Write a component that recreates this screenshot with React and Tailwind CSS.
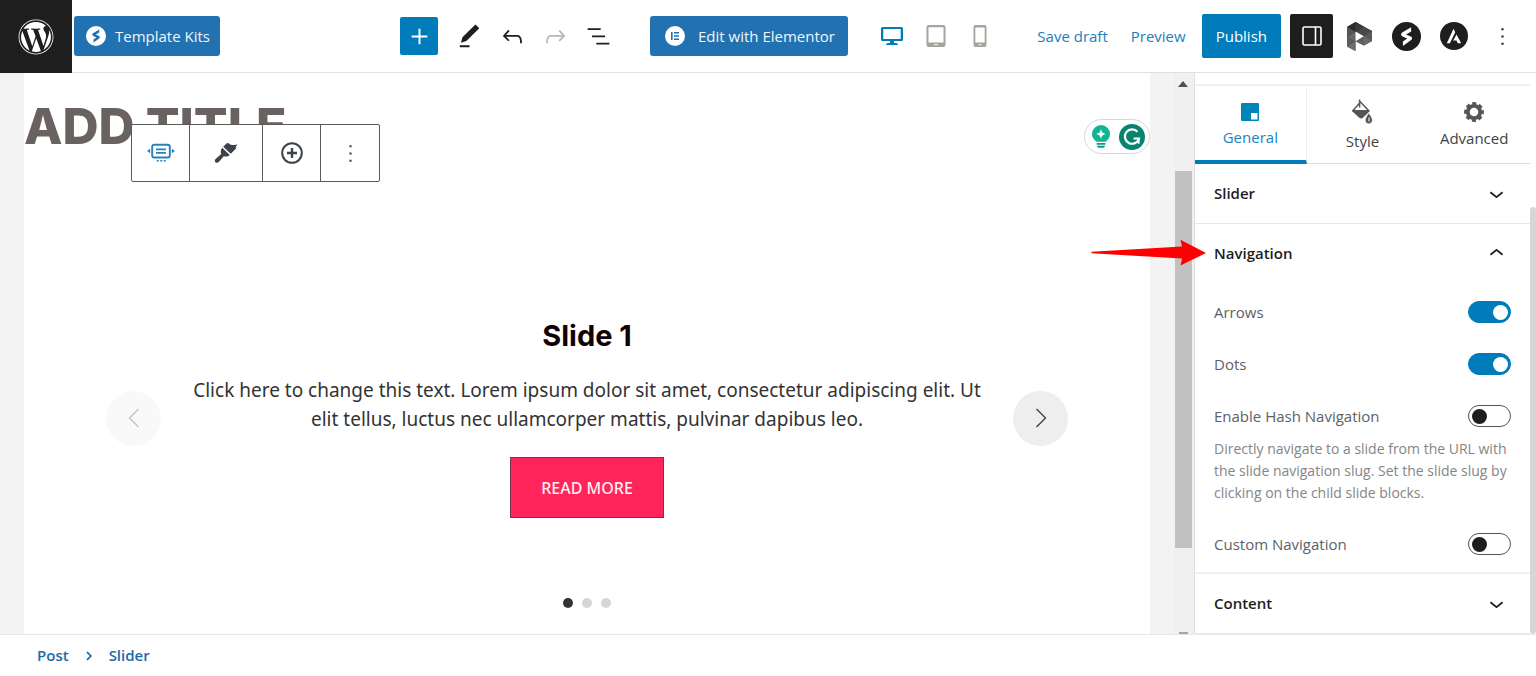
import { FaWordpress } from "react-icons/fa";

const UI_FONT = "font-['Open_Sans','Noto_Sans',sans-serif]";

function WpIcon({ d, className = "size-[29px]" }) {
  return (
    <svg viewBox="0 0 24 24" fill="currentColor" className={className} aria-hidden="true">
      <path d={d} />
    </svg>
  );
}

const UNDO =
  "M18.3 11.7c-.6-.6-1.4-.9-2.3-.9H6.7l2.9-3.3-1.1-1-4.5 5L8.5 16l1-1-2.7-2.7H16c.5 0 .9.2 1.3.5 1 1 1 3.4 1 4.5v.3h1.5v-.2c0-1.5 0-4.3-1.5-5.7z";
const REDO =
  "M15.6 6.5l-1.1 1 2.9 3.3H8c-.9 0-1.7.3-2.3.9-1.4 1.5-1.4 4.2-1.4 5.6v.2h1.5v-.3c0-1.1 0-3.5 1-4.5.3-.3.7-.5 1.3-.5h9.2L14.5 15l1.1 1.1 4.6-4.6-4.6-5z";
const EDIT = "M20.1 5.1L16.9 2 6.2 12.7l-1.3 4.4 4.5-1.3L20.1 5.1zM4 20.8h8v-1.5H4v1.5z";
const LIST = "M13.8 5.2H3v1.5h10.8V5.2zm-3.6 12v1.5H21v-1.5H10.2zm7.2-6H6.6v1.5h10.8v-1.5z";
const PLUS = "M11.2 5.5h1.6v5.7h5.7v1.6h-5.7v5.7h-1.6v-5.7H5.5v-1.6h5.7z";
const DOWN = "M17.5 11.6L12 16l-5.5-4.4.9-1.2L12 14l4.6-3.6.9 1.2z";
const UP = "M6.5 12.4L12 8l5.5 4.4-.9 1.2L12 10l-4.6 3.6-.9-1.2z";
const MORE = "M12.900 18.900h-1.800v-1.800h1.800v1.800zm0-6h-1.800v-1.800h1.800v1.800zm0-6h-1.800V5.100h1.800v1.800z";

function Spectra({ bg, fg, className }) {
  return (
    <svg viewBox="0 0 30 30" className={className} aria-hidden="true">
      <circle cx="15" cy="15" r="15" fill={bg} />
      <path
        fill={fg}
        d="M19.800 5.400v4.400l-5.200 3.100 4.800 2.200c1.700.8 1.900 2.600.4 3.600l-8.500 6v-4.400l4.400-3.200-4.800-2.200c-1.900-.9-2-3-.4-4z"
      />
    </svg>
  );
}

function Header() {
  return (
    <header className="flex h-[73px] items-center border-b border-[#e0e0e0] bg-white text-[15px] text-[#1e1e1e]">
      <div className="flex w-[400px] shrink-0 items-center gap-[2px]">
        <a
          href="#dashboard"
          aria-label="View posts"
          className="-mb-px flex h-[73px] w-[72px] items-center justify-center bg-[#1e1e1e] text-white"
        >
          <FaWordpress className="size-9" />
        </a>
        <button className="flex h-10 items-center gap-[9px] rounded-[3px] bg-[#2271b1] pr-[10px] pl-3 text-[#f0f6fc]">
          <Spectra bg="#fff" fg="#2271b1" className="size-5" />
          Template Kits
        </button>
      </div>

      <div className="flex items-center">
        <button aria-label="Add block" className="flex size-[38px] items-center justify-center rounded-[2px] bg-[#007cba] text-white">
          <WpIcon d={PLUS} />
        </button>
        <div className="ml-[17px] flex items-center gap-[14px]">
          <button aria-label="Tools"><WpIcon d={EDIT} /></button>
          <button aria-label="Undo"><WpIcon d={UNDO} /></button>
          <button aria-label="Redo" className="text-[#b8b8b8]"><WpIcon d={REDO} /></button>
          <button aria-label="List view"><WpIcon d={LIST} /></button>
        </div>
        <button className="ml-[37px] flex h-10 items-center gap-[13px] rounded-[3px] bg-[#2271b1] pr-[13px] pl-[15px] text-[#f0f6fc]">
          <svg viewBox="0 0 20 20" className="size-5" aria-hidden="true">
            <circle cx="10" cy="10" r="10" fill="#fff" />
            <path fill="#2271b1" d="M6 6h1.600v8H6zM9 6h5v1.600H9zM9 9.200h5v1.600H9zM9 12.400h5V14H9z" />
          </svg>
          Edit with Elementor
        </button>
      </div>

      <div className="ml-auto flex items-center">
        <div className="flex items-center gap-[22px] text-[#a2a69c]">
          <button aria-label="Desktop" className="text-[#007cba]">
            <svg viewBox="0 0 22 22" className="size-[22px]" aria-hidden="true">
              <path fill="currentColor" fillRule="evenodd" d="M1.500 2h19a1.500 1.500 0 0 1 1.500 1.500v11a1.500 1.500 0 0 1-1.500 1.500H13v2h2c1 0 2 .8 2 2H5c0-1.200 1-2 2-2h2v-2H1.500A1.500 1.500 0 0 1 0 14.500v-11A1.500 1.500 0 0 1 1.500 2zM2.300 4v10h17.400V4z" />
            </svg>
          </button>
          <button aria-label="Tablet">
            <svg viewBox="0 0 22 22" className="size-[22px]" aria-hidden="true">
              <path fill="currentColor" fillRule="evenodd" d="M3.500 0h15A2 2 0 0 1 20.500 2v18a2 2 0 0 1-2 2h-15a2 2 0 0 1-2-2V2a2 2 0 0 1 2-2zM3.500 2.200v15.400h15V2.200z" />
              <path fill="#e9ebe6" d="M9 19h4.200v1.200H9z" />
            </svg>
          </button>
          <button aria-label="Mobile">
            <svg viewBox="0 0 22 22" className="size-[22px]" aria-hidden="true">
              <path fill="currentColor" fillRule="evenodd" d="M6.500 0h9A2 2 0 0 1 17.500 2v18a2 2 0 0 1-2 2h-9a2 2 0 0 1-2-2V2a2 2 0 0 1 2-2zM6.300 2.600v15h9.400v-15z" />
              <path fill="#e9ebe6" d="M9.500 19h3v1.200h-3z" />
            </svg>
          </button>
        </div>
        <button className="ml-[46px] text-[#2080bc]">Save draft</button>
        <button className="ml-[23px] text-[#2080bc]">Preview</button>
        <button className="ml-4 h-11 rounded-[2px] bg-[#007cba] px-[14px] text-white">Publish</button>
        <button aria-label="Settings" className="ml-[9px] flex h-11 w-[43px] items-center justify-center rounded-[2px] bg-[#1e1e1e] text-white">
          <svg viewBox="0 0 20 20" className="size-5" fill="none" stroke="currentColor" strokeWidth="1.600" aria-hidden="true">
            <rect x="1" y="1" width="18" height="18" rx="1.500" />
            <path d="M13.500 1v18" />
          </svg>
        </button>
        <button aria-label="Prime Slider" className="ml-[14px]">
          <svg viewBox="0 0 25 29" className="h-[29px] w-[25px]" aria-hidden="true">
            <path fill="#4a4a4a" d="M8.500 0L25 9v10l-8 4.500-8.500-4.300V29L0 24.500V5z" />
            <path fill="#2c2c2c" d="M8.500 0L0 5l8.500 5 8.500-5.300z" />
            <path fill="#3c3c3c" d="M8.500 0v10L17 4.700z" />
            <path fill="#555" d="M0 5v10l8.500-5z" />
            <path fill="#686868" d="M0 15l8.500-5v9.200z" />
            <path fill="#5c5c5c" d="M0 15v9.500l8.500-5.300z" />
            <path fill="#6e6e6e" d="M8.500 19.200L0 24.500 8.500 29z" />
            <path fill="#484848" d="M17 4.700V14l8-5z" />
            <path fill="#5a5a5a" d="M25 9v10l-8-5z" />
            <path fill="#6a6a6a" d="M17 14v9.500l8-4.500z" />
            <path fill="#606060" d="M17 14v9.500l-8.500-4.300z" />
            <path fill="#fff" d="M8.500 9.600l8.300 4.600-8.300 5z" />
          </svg>
        </button>
        <button aria-label="Spectra" className="ml-5">
          <Spectra bg="#1e1e1e" fg="#fff" className="size-[29px]" />
        </button>
        <button aria-label="Astra settings" className="ml-[19px]">
          <svg viewBox="0 0 28 28" className="size-7" aria-hidden="true">
            <circle cx="14" cy="14" r="14" fill="#1e1e1e" />
            <path fill="#fff" d="M13.500 6.800l1.700 3.500-5.300 11H6.800zM16.500 12.500l4.700 8.800h-3.500l-1.200-2.700h-3.300z" />
          </svg>
        </button>
        <button aria-label="Options" className="mr-[19px] ml-5"><WpIcon d={MORE} /></button>
      </div>
    </header>
  );
}

function BlockToolbar() {
  return (
    <div className="absolute top-[51px] left-[107px] flex h-[58px] divide-x divide-[#5a5a5a] rounded-[2px] border border-[#5a5a5a] bg-white text-[#3c434a]">
      <button aria-label="Slider block" className="flex w-[58px] items-center justify-center text-[#2a80bb]">
        <svg viewBox="0 0 28 20" className="h-5 w-7" fill="none" aria-hidden="true">
          <rect x="5.200" y="1.700" width="17.600" height="12.800" rx="2" stroke="currentColor" strokeWidth="1.900" />
          <path stroke="currentColor" strokeWidth="1.700" d="M9 6.300h10M9 9.800h10" />
          <path fill="currentColor" d="M0 8l3.200-2.300v4.600zM28 8l-3.200-2.300v4.600z" />
          <path stroke="currentColor" strokeWidth="1.600" strokeDasharray="2 1.500" d="M9.800 17.700h9" />
        </svg>
      </button>
      <button aria-label="Copy styles" className="flex w-[73px] items-center justify-center">
        <svg viewBox="0 0 24 20" className="h-5 w-6" fill="currentColor" aria-hidden="true">
          <path d="M9.200 3.800L12.400.6c1-.8 2-.6 2.900.1l.8.7c2.300.7 4.800 1 7.200.2-.3 1.200-1.300 2-2.200 2.700.6.200 1 .2 1.500 0-.6 1.500-1.700 2.600-3 3.700l-2.800 2.800z" />
          <path d="M8.200 4.800l7.500 7.200-1.600 1.300c-1.700.6-3 .2-4.300 0l-5 5.600c-1 1-2.500 1.100-3.400.3-.9-.9-.8-2.200.2-3.200l5.600-4.900c-.5-1.600-.7-3 .1-4.800z" />
        </svg>
      </button>
      <button aria-label="Add slide" className="flex w-[58px] items-center justify-center">
        <svg viewBox="0 0 22 22" className="size-[22px]" fill="none" stroke="currentColor" aria-hidden="true">
          <circle cx="11" cy="11" r="9.800" strokeWidth="2" />
          <path strokeWidth="2.400" d="M11 6v10M6 11h10" />
        </svg>
      </button>
      <button aria-label="Options" className="flex w-[58px] items-center justify-center"><WpIcon d={MORE} /></button>
    </div>
  );
}

function GrammarBadge() {
  return (
    <div className="absolute top-[46px] right-0 flex h-[35px] w-[66px] items-center justify-between rounded-full border border-[#d5d7e3] bg-white pr-1 pl-[7px]">
      <svg viewBox="0 0 18 23" className="h-[23px] w-[18px]" aria-hidden="true">
        <path fill="#0fb595" d="M9 0a9 9 0 0 1 9 9c0 3.500-2 6-4.500 7.800h-9C2 15 0 12.500 0 9a9 9 0 0 1 9-9z" />
        <path fill="#0b9c82" d="M4.700 18h8.600v1.700H4.700zM5 20.800h8c-.2 1.400-1 2-2 2H7c-1 0-1.800-.6-2-2z" />
        <path fill="#fff" d="M9 4c.7 3.200 1.800 4.300 5 5-3.200.7-4.300 1.800-5 5-.7-3.200-1.800-4.300-5-5 3.200-.7 4.300-1.800 5-5z" />
      </svg>
      <svg viewBox="0 0 26 26" className="size-[26px]" fill="none" aria-hidden="true">
        <circle cx="13" cy="13" r="13" fill="#07846f" />
        <path stroke="#fff" strokeWidth="2.200" d="M18.500 7.800A7.200 7.200 0 1 0 20 14.500h-5.500" />
        <path stroke="#fff" strokeWidth="2" d="M19.600 14.500v5.200" />
      </svg>
    </div>
  );
}

function Canvas() {
  return (
    <section className="flex min-w-0 flex-1 bg-[#f3f3f3] pl-6">
      <div className="relative min-w-0 flex-1 bg-white pt-6">
        <h1 className="font-['Inter',sans-serif] text-[50px] leading-[58px] font-extrabold text-[#6a6161]">ADD TITLE</h1>
        <BlockToolbar />
        <GrammarBadge />
        <div className="mt-[163px] flex items-center gap-[26px] px-[82px]">
          <button aria-label="Previous slide" className="flex size-[55px] shrink-0 items-center justify-center rounded-full bg-[#f9f9f9] text-[#c3c3c3]">
            <svg viewBox="0 0 12 20" className="h-5 w-3" fill="none" stroke="currentColor" strokeWidth="1.400" aria-hidden="true">
              <path d="M10.500 1L1.500 10l9 9" />
            </svg>
          </button>
          <div className="flex min-w-0 flex-1 flex-col items-center text-center">
            <h2 className="font-['Inter',sans-serif] text-[29px] leading-9 font-bold text-[#110303]">Slide 1</h2>
            <p className="mt-[22px] font-['Noto_Sans',sans-serif] text-[19px] leading-[29px] text-[#333]">
              Click here to change this text. Lorem ipsum dolor sit amet, consectetur adipiscing elit. Ut elit tellus, luctus nec ullamcorper mattis, pulvinar dapibus leo.
            </p>
            <a
              href="#read-more"
              className="mt-[23px] flex h-[61px] items-center border border-[#74364a] bg-[#ff2459] px-[30px] font-['Noto_Sans',sans-serif] text-[16px] font-medium text-[#ffeff3]"
            >
              READ MORE
            </a>
          </div>
          <button aria-label="Next slide" className="flex size-[55px] shrink-0 items-center justify-center rounded-full bg-[#eee] text-[#444]">
            <svg viewBox="0 0 12 20" className="h-5 w-3" fill="none" stroke="currentColor" strokeWidth="1.400" aria-hidden="true">
              <path d="M1.500 1l9 9-9 9" />
            </svg>
          </button>
        </div>
        <div className="mt-20 flex justify-center gap-[9px] pb-[26px]">
          <button aria-label="Go to slide 1" className="size-[10px] rounded-full bg-[#333]" />
          <button aria-label="Go to slide 2" className="size-[10px] rounded-full bg-[#d6d6d6]" />
          <button aria-label="Go to slide 3" className="size-[10px] rounded-full bg-[#d6d6d6]" />
        </div>
      </div>
      <div className="ml-6 flex w-5 flex-col items-center bg-[#f0f0f0] pt-2 pr-[2px]" aria-hidden="true">
        <svg viewBox="0 0 10 6" className="h-[6px] w-[10px]"><path fill="#505050" d="M0 6l5-6 5 6z" /></svg>
        <div className="mt-[84px] h-[377px] w-[17px] bg-[#c1c1c1]" />
        <div className="mt-auto h-[2px] w-[9px] bg-[#a5a5a5]" />
      </div>
    </section>
  );
}

function Toggle({ id, label, on }) {
  return (
    <div className="flex h-6 items-center justify-between text-[15px] text-[#5d6166]">
      <label htmlFor={id}>{label}</label>
      <input
        id={id}
        type="checkbox"
        role="switch"
        defaultChecked={on}
        className="flex h-[22px] w-[43px] appearance-none items-center rounded-full border border-[#555] bg-white px-[3px] before:size-[15px] before:rounded-full before:bg-[#1e1e1e] checked:justify-end checked:border-[#007cba] checked:bg-[#007cba] checked:px-[2px] checked:before:bg-white"
      />
    </div>
  );
}

function PanelHeader({ title, open }) {
  return (
    <button aria-expanded={open} className="flex h-[59px] w-full items-center justify-between px-[19px] text-[15px] font-semibold text-[#1e1e1e]">
      {title}
      <WpIcon d={open ? UP : DOWN} />
    </button>
  );
}

function Sidebar() {
  return (
    <aside className="flex w-[342px] shrink-0 border-l border-[#e0e0e0] bg-white">
      <div className="min-w-0 flex-1 pt-[11px]">
        <div role="tablist" className="grid h-20 grid-cols-3 border-t-2 border-b border-t-[#f0f0f0] border-b-[#d9dce0] text-[15px] text-[#3f4347]">
          <button role="tab" aria-selected="true" className="-mb-px flex flex-col items-center border-r border-b-4 border-r-[#eee] border-b-[#007cba] pt-[17px] text-[#1f82bf]">
            <svg viewBox="0 0 18 18" className="size-[18px]" aria-hidden="true">
              <rect width="18" height="18" rx="1" fill="#0085ba" />
              <path fill="#fff" d="M10 10h6.500v6.500H10z" />
            </svg>
            <span className="mt-[6px] leading-5">General</span>
          </button>
          <button role="tab" aria-selected="false" className="flex flex-col items-center pt-[13px]">
            <svg viewBox="0 0 22 25" className="h-[25px] w-[22px]" fill="none" aria-hidden="true">
              <path stroke="#555" strokeWidth="1.500" d="M2 11.500L9.500 3l8 8.500M8.600.5v8" />
              <path fill="#555" d="M1 11h17.500c.4.600.2 1.200-.3 1.700l-6 5.800c-1.200 1.200-3 1.200-4.200 0l-6.300-5.700C1 12.300.7 11.600 1 11z" />
              <path fill="#555" stroke="#fff" strokeWidth=".8" d="M17.800 14c2.200 3 3.700 5.200 3.700 7.200a3.700 3.700 0 0 1-7.400 0c0-2 1.500-4.200 3.700-7.200z" />
              <path stroke="#fff" strokeWidth="1" d="M18 18.500v4" />
            </svg>
            <span className="mt-[7px] leading-5">Style</span>
          </button>
          <button role="tab" aria-selected="false" className="flex flex-col items-center pt-4">
            <svg viewBox="0 0 20 20" className="size-5" fill="none" aria-hidden="true">
              <circle cx="10" cy="10" r="6.200" stroke="#555" strokeWidth="3.800" />
              <circle cx="10" cy="10" r="8.600" stroke="#555" strokeWidth="2.600" strokeDasharray="4 2.750" strokeDashoffset="2" />
            </svg>
            <span className="mt-[6px] leading-5">Advanced</span>
          </button>
        </div>

        <div className="border-b border-[#e8e8e8]"><PanelHeader title="Slider" open={false} /></div>

        <div className="border-b-2 border-[#f0f0f0]">
          <div className="relative">
            <PanelHeader title="Navigation" open />
            <svg viewBox="0 0 116 28" className="absolute top-[15px] left-[-104px] h-7 w-[116px]" aria-hidden="true">
              <path fill="#f00" d="M.500 12.800L91 7.500 89.500.700 115 14 89.500 26.500 91 19.500.500 14.300z" />
            </svg>
          </div>
          <div className="flex flex-col gap-7 px-[19px] pt-[17px] pb-4">
            <Toggle id="arrows" label="Arrows" on />
            <Toggle id="dots" label="Dots" on />
            <div>
              <Toggle id="hash" label="Enable Hash Navigation" on={false} />
              <p className="mt-[10px] text-[14px] leading-[22px] text-[#858585]">
                Directly navigate to a slide from the URL with the slide navigation slug. Set the slide slug by clicking on the child slide blocks.
              </p>
            </div>
            <Toggle id="custom" label="Custom Navigation" on={false} />
          </div>
        </div>

        <div className="border-b border-[#e8e8e8]"><PanelHeader title="Content" open={false} /></div>
      </div>
      <div className="flex w-[6px] flex-col pt-[134px]" aria-hidden="true">
        <div className="flex-1 rounded-full bg-[#d6d6d6]" />
      </div>
    </aside>
  );
}

export default function App() {
  return (
    <div className={`flex min-h-screen flex-col bg-white ${UI_FONT}`}>
      <Header />
      <main className="flex flex-1">
        <Canvas />
        <Sidebar />
      </main>
      <footer className="border-t border-[#e8e8e8] bg-white">
        <nav aria-label="Breadcrumb" className="flex h-[41px] items-center gap-[17px] px-[37px] text-[15px] font-semibold text-[#1a6ba6]">
          <a href="#post">Post</a>
          <svg viewBox="0 0 6 10" className="h-[10px] w-[6px]" fill="none" stroke="currentColor" strokeWidth="1.800" aria-hidden="true">
            <path d="M1 1l3.800 4L1 9" />
          </svg>
          <a href="#slider">Slider</a>
        </nav>
      </footer>
    </div>
  );
}
